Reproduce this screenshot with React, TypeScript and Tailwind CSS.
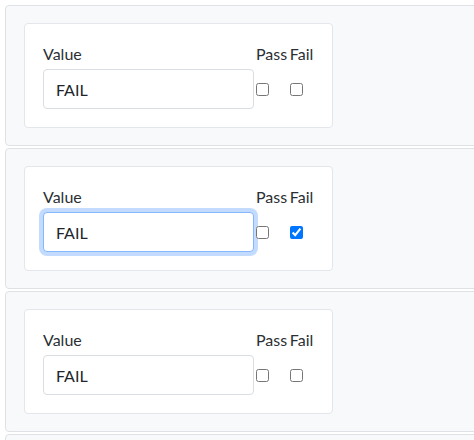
const rows = [
  { focused: false, pass: false, fail: false },
  { focused: true, pass: false, fail: true },
  { focused: false, pass: false, fail: false },
];

function ResultCard({ focused, pass, fail }: { focused: boolean; pass: boolean; fail: boolean }) {
  return (
    <div className="w-[309px] rounded-[4px] border border-[#e3e6ea] bg-white p-[18px]">
      <div className="grid grid-cols-[211px_auto_auto] gap-x-[2px]">
        {/* Labels */}
        <label className="mb-[3px] h-6 leading-6">Value</label>
        <span className="h-6 leading-6">Pass</span>
        <span className="h-6 leading-6">Fail</span>

        {/* Controls */}
        <input
          type="text"
          defaultValue="FAIL"
          className={
            focused
              ? "h-10 rounded-[4px] border border-[#86b7fe] bg-white px-3 text-[#212529] shadow-[0_0_0_4px_rgba(13,110,253,0.25)] outline-none"
              : "h-10 rounded-[4px] border border-[#dadde1] bg-white px-3 text-[#212529] outline-none"
          }
        />
        <div className="flex items-center">
          <input type="checkbox" defaultChecked={pass} className="h-[13px] w-[13px]" />
        </div>
        <div className="flex items-center">
          <input type="checkbox" defaultChecked={fail} className="h-[13px] w-[13px]" />
        </div>
      </div>
    </div>
  );
}

export default function App() {
  return (
    <div className="h-[440px] w-[474px] overflow-hidden bg-white pl-[5px] pt-[5px] font-['Lato',sans-serif] text-[16px] text-[#2b2f33]">
      <div className="flex w-[480px] flex-col gap-[2px]">
        {rows.map((r, i) => (
          <div
            key={i}
            className="h-[141px] rounded-l-[4px] border border-[#dee2e6] bg-[#f8f9fa] px-[18px] py-[17px]"
          >
            <ResultCard {...r} />
          </div>
        ))}
        <div className="h-[141px] rounded-l-[4px] border border-[#dee2e6] bg-[#f8f9fa]" />
      </div>
    </div>
  );
}
